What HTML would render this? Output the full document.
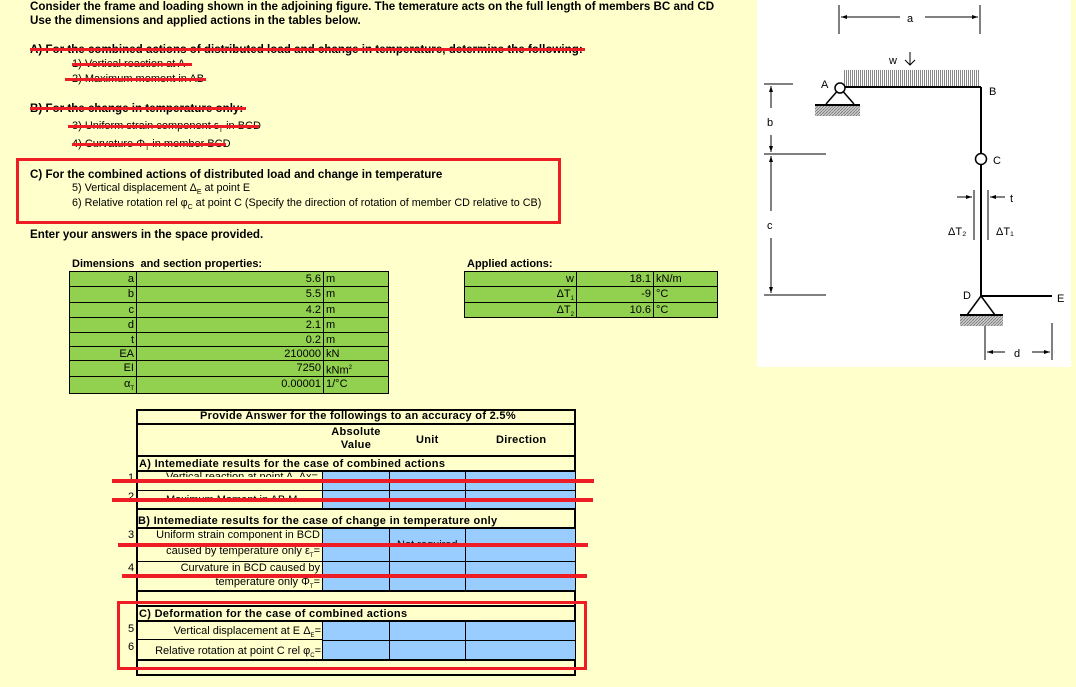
<!DOCTYPE html>
<html><head><meta charset="utf-8"><style>
*{margin:0;padding:0;box-sizing:border-box}
body{width:1076px;height:687px;background:#FFFFCC;font-family:"Liberation Sans",Arial,sans-serif;font-size:11px;color:#000;position:relative;overflow:hidden}
.t{position:absolute;white-space:nowrap;line-height:13px}
.b{font-weight:bold}
.bb{font-size:11.6px}
.tb{letter-spacing:0.3px}
.n{font-size:10.8px}
.r{position:absolute;background:#EE1C25}
.box{position:absolute;border:3px solid #EE1C25}
.c{position:absolute;border:1px solid #000;line-height:14px;font-size:11px;white-space:nowrap;overflow:hidden}
.g{background:#92D050}
.bl{background:#99CCFF}
.ar{text-align:right;padding-right:2px}
.al{padding-left:2px}
.hl{position:absolute;background:#000}
</style></head><body>

<div class="t b bb" style="left:30px;top:0px">Consider the frame and loading shown in the adjoining figure. The temerature acts on the full length of members BC and CD</div>
<div class="t b bb" style="left:30px;top:14px">Use the dimensions and applied actions in the tables below.</div>
<div class="t b bb" style="left:30px;top:43px">A) For the combined actions of distributed load and change in temperature, determine the following:</div>
<div class="r" style="left:30px;top:48px;width:555px;height:3px"></div>
<div class="t" style="left:72px;top:58px">1) Vertical reaction at A</div>
<div class="r" style="left:72px;top:63px;width:120px;height:3px"></div>
<div class="t" style="left:72px;top:73px">2) Maximum moment in AB</div>
<div class="r" style="left:65px;top:78px;width:141px;height:3px"></div>
<div class="t b bb" style="left:30px;top:102px">B) For the change in temperature only:</div>
<div class="r" style="left:30px;top:107px;width:216px;height:3px"></div>
<div class="t" style="left:72px;top:120px">3) Uniform strain component ε<sub style="font-size:7px">T</sub> in BCD</div>
<div class="r" style="left:68px;top:125px;width:191px;height:3px"></div>
<div class="t" style="left:72px;top:138px">4) Curvature Φ<sub style="font-size:7px">T</sub> in member BCD</div>
<div class="r" style="left:72px;top:143px;width:154px;height:3px"></div>

<div class="box" style="left:16px;top:158px;width:545px;height:66px"></div>
<div class="t b bb" style="left:30px;top:168px">C) For the combined actions of distributed load and change in temperature</div>
<div class="t n" style="left:72px;top:182px">5) Vertical displacement Δ<sub style="font-size:7px">E</sub> at point E</div>
<div class="t n" style="left:72px;top:197px">6) Relative rotation rel φ<sub style="font-size:7px">C</sub> at point C (Specify the direction of rotation of member CD relative to CB)</div>
<div class="t b bb" style="left:30px;top:228px">Enter your answers in the space provided.</div>

<div class="t b" style="left:72px;top:258px">Dimensions&nbsp; and section properties:</div>
<div class="t b" style="left:467px;top:258px">Applied actions:</div>

<div class="c g ar" style="left:69px;top:271px;width:68px;height:16px">a</div><div class="c g ar" style="left:136px;top:271px;width:188px;height:16px">5.6</div><div class="c g al" style="left:323px;top:271px;width:66px;height:16px">m</div>
<div class="c g ar" style="left:69px;top:286px;width:68px;height:17px">b</div><div class="c g ar" style="left:136px;top:286px;width:188px;height:17px">5.5</div><div class="c g al" style="left:323px;top:286px;width:66px;height:17px">m</div>
<div class="c g ar" style="left:69px;top:302px;width:68px;height:16px">c</div><div class="c g ar" style="left:136px;top:302px;width:188px;height:16px">4.2</div><div class="c g al" style="left:323px;top:302px;width:66px;height:16px">m</div>
<div class="c g ar" style="left:69px;top:317px;width:68px;height:16px">d</div><div class="c g ar" style="left:136px;top:317px;width:188px;height:16px">2.1</div><div class="c g al" style="left:323px;top:317px;width:66px;height:16px">m</div>
<div class="c g ar" style="left:69px;top:332px;width:68px;height:15px">t</div><div class="c g ar" style="left:136px;top:332px;width:188px;height:15px">0.2</div><div class="c g al" style="left:323px;top:332px;width:66px;height:15px">m</div>
<div class="c g ar" style="left:69px;top:346px;width:68px;height:15px">EA</div><div class="c g ar" style="left:136px;top:346px;width:188px;height:15px">210000</div><div class="c g al" style="left:323px;top:346px;width:66px;height:15px">kN</div>
<div class="c g ar" style="left:69px;top:360px;width:68px;height:17px">EI</div><div class="c g ar" style="left:136px;top:360px;width:188px;height:17px">7250</div><div class="c g al" style="left:323px;top:360px;width:66px;height:17px">kNm<sup style="font-size:6px">2</sup></div>
<div class="c g ar" style="left:69px;top:376px;width:68px;height:18px">α<sub style="font-size:6px">T</sub></div><div class="c g ar" style="left:136px;top:376px;width:188px;height:18px">0.00001</div><div class="c g al" style="left:323px;top:376px;width:66px;height:18px">1/°C</div>

<div class="c g ar" style="left:464px;top:271px;width:113px;height:16px">w</div><div class="c g ar" style="left:576px;top:271px;width:78px;height:16px">18.1</div><div class="c g al" style="left:653px;top:271px;width:65px;height:16px">kN/m</div>
<div class="c g ar" style="left:464px;top:286px;width:113px;height:17px">ΔT<sub style="font-size:6px">1</sub></div><div class="c g ar" style="left:576px;top:286px;width:78px;height:17px">-9</div><div class="c g al" style="left:653px;top:286px;width:65px;height:17px">°C</div>
<div class="c g ar" style="left:464px;top:302px;width:113px;height:16px">ΔT<sub style="font-size:6px">2</sub></div><div class="c g ar" style="left:576px;top:302px;width:78px;height:16px">10.6</div><div class="c g al" style="left:653px;top:302px;width:65px;height:16px">°C</div>

<div style="position:absolute;left:136px;top:409px;width:440px;height:267px;border:2px solid #000"></div>
<div class="hl" style="left:136px;top:423px;width:440px;height:2px"></div>
<div class="t b tb" style="left:200px;top:410px">Provide Answer for the followings to an accuracy of 2.5%</div>
<div class="t b tb" style="left:328px;top:426px;text-align:center;width:56px">Absolute<br>Value</div>
<div class="t b tb" style="left:416px;top:434px">Unit</div>
<div class="t b tb" style="left:496px;top:434px">Direction</div>
<div class="hl" style="left:136px;top:455px;width:440px;height:2px"></div>
<div class="t b tb" style="left:139px;top:458px">A) Intemediate results for the case of combined actions</div>
<div class="hl" style="left:136px;top:470px;width:440px;height:2px"></div>
<div class="c bl" style="left:322px;top:471px;width:68px;height:20px"></div><div class="c bl" style="left:389px;top:471px;width:77px;height:20px"></div><div class="c bl" style="left:465px;top:471px;width:111px;height:20px"></div>
<div class="c bl" style="left:322px;top:490px;width:68px;height:19px"></div><div class="c bl" style="left:389px;top:490px;width:77px;height:19px"></div><div class="c bl" style="left:465px;top:490px;width:111px;height:19px"></div>
<div class="hl" style="left:136px;top:490px;width:187px;height:1px"></div>
<div class="t" style="left:166px;top:471px;height:6px;overflow:hidden">Vertical reaction at point A, Ax=</div>
<div class="t" style="left:166px;top:494px;height:6px;overflow:hidden">Maximum Moment in AB M<sub style="font-size:6px">ABmax</sub></div>
<div class="t" style="left:128px;top:472px">1</div><div class="t" style="left:128px;top:491px">2</div>
<div class="hl" style="left:136px;top:508px;width:440px;height:2px"></div>
<div class="t b tb" style="left:138px;top:515px">B) Intemediate results for the case of change in temperature only</div>
<div class="hl" style="left:136px;top:527px;width:440px;height:2px"></div>
<div class="c bl" style="left:322px;top:528px;width:68px;height:34px"></div><div class="c bl" style="left:389px;top:528px;width:77px;height:34px"></div><div class="c bl" style="left:465px;top:528px;width:111px;height:34px"></div>
<div class="c bl" style="left:322px;top:561px;width:68px;height:30px"></div><div class="c bl" style="left:389px;top:561px;width:77px;height:30px"></div><div class="c bl" style="left:465px;top:561px;width:111px;height:30px"></div>
<div class="hl" style="left:136px;top:561px;width:187px;height:1px"></div>
<div class="hl" style="left:136px;top:590px;width:440px;height:2px"></div>
<div class="t" style="left:397px;top:539px;height:6px;overflow:hidden">Not required</div>
<div class="t" style="left:140px;top:529px;width:180px;text-align:right">Uniform strain component in BCD</div>
<div class="t" style="left:140px;top:545px;width:180px;text-align:right">caused by temperature only ε<sub style="font-size:6px">T</sub>=</div>
<div class="t" style="left:140px;top:562px;width:180px;text-align:right">Curvature in BCD caused by</div>
<div class="t" style="left:140px;top:576px;width:180px;text-align:right">temperature only Φ<sub style="font-size:6px">T</sub>=</div>
<div class="t" style="left:128px;top:529px">3</div><div class="t" style="left:128px;top:562px">4</div>
<div class="hl" style="left:136px;top:605px;width:440px;height:2px"></div>
<div class="t b tb" style="left:139px;top:608px">C) Deformation for the case of combined actions</div>
<div class="hl" style="left:136px;top:620px;width:440px;height:2px"></div>
<div class="c bl" style="left:322px;top:621px;width:68px;height:20px"></div><div class="c bl" style="left:389px;top:621px;width:77px;height:20px"></div><div class="c bl" style="left:465px;top:621px;width:111px;height:20px"></div>
<div class="c bl" style="left:322px;top:640px;width:68px;height:21px"></div><div class="c bl" style="left:389px;top:640px;width:77px;height:21px"></div><div class="c bl" style="left:465px;top:640px;width:111px;height:21px"></div>
<div class="hl" style="left:136px;top:639px;width:187px;height:1px"></div>
<div class="hl" style="left:136px;top:659px;width:440px;height:2px"></div>
<div class="t" style="left:140px;top:625px;width:181px;text-align:right">Vertical displacement at E Δ<sub style="font-size:6px">E</sub>=</div>
<div class="t" style="left:140px;top:645px;width:181px;text-align:right">Relative rotation at point C rel φ<sub style="font-size:6px">C</sub>=</div>
<div class="t" style="left:128px;top:623px">5</div><div class="t" style="left:128px;top:641px">6</div>

<div class="r" style="left:112px;top:479px;width:482px;height:4px"></div>
<div class="r" style="left:112px;top:498px;width:481px;height:4px"></div>
<div class="r" style="left:118px;top:543px;width:470px;height:4px"></div>
<div class="r" style="left:122px;top:574px;width:465px;height:4px"></div>
<div class="box" style="left:117px;top:601px;width:470px;height:69px"></div>

<svg style="position:absolute;left:757px;top:0" width="314" height="367" viewBox="757 0 314 367">
<defs><pattern id="h" width="2" height="2" patternUnits="userSpaceOnUse"><rect width="2" height="2" fill="#fff"/><rect width="1" height="2" fill="#888"/></pattern>
<pattern id="h2" width="3" height="3" patternUnits="userSpaceOnUse"><rect width="3" height="3" fill="#ccc"/><path d="M0 3L3 0" stroke="#777" stroke-width="0.8"/></pattern></defs>
<rect x="757" y="0" width="314" height="367" fill="#fff"/>
<g stroke="#000" stroke-width="1" fill="none">
<line x1="839" y1="5" x2="839" y2="34"/><line x1="980" y1="5" x2="980" y2="34"/>
<line x1="841" y1="17" x2="900" y2="17"/><line x1="925" y1="17" x2="978" y2="17"/>
<line x1="910" y1="52" x2="910" y2="65"/><path d="M905 60L910 65L915 60"/>
<line x1="764" y1="84" x2="793" y2="84"/><line x1="764" y1="154" x2="826" y2="154"/><line x1="764" y1="295" x2="826" y2="295"/>
<line x1="771" y1="86" x2="771" y2="108"/><line x1="771" y1="135" x2="771" y2="152"/>
<line x1="771" y1="156" x2="771" y2="211"/><line x1="771" y1="238" x2="771" y2="293"/>
<line x1="974" y1="190" x2="974" y2="240"/><line x1="988" y1="190" x2="988" y2="240"/>
<line x1="957" y1="197" x2="972" y2="197"/><line x1="990" y1="197" x2="1005" y2="197"/>
<line x1="985" y1="323" x2="985" y2="360"/><line x1="1052" y1="323" x2="1052" y2="360"/>
<line x1="987" y1="352" x2="1005" y2="352"/><line x1="1032" y1="352" x2="1050" y2="352"/>
</g>
<g fill="#000">
<path d="M841 17l6-2v4z"/><path d="M978 17l-6-2v4z"/>
<path d="M771 86l-2 6h4z"/><path d="M771 152l-2-6h4z"/><path d="M771 156l-2 6h4z"/><path d="M771 293l-2-6h4z"/>
<path d="M972 197l-6-2v4z"/><path d="M990 197l6-2v4z"/>
<path d="M987 352l6-2v4z"/><path d="M1050 352l-6-2v4z"/>
</g>
<rect x="844" y="70" width="136" height="16" fill="url(#h)"/>
<rect x="815" y="105" width="45" height="11" fill="url(#h2)"/>
<rect x="960" y="316" width="43" height="10" fill="url(#h2)"/>
<g stroke="#000" fill="none">
<line x1="840" y1="87" x2="981" y2="87" stroke-width="2"/>
<line x1="981" y1="87" x2="981" y2="296" stroke-width="2"/>
<line x1="981" y1="296" x2="1052" y2="296" stroke-width="2"/>
<path d="M840 88L826 104M840 88L854 104" stroke-width="1.5"/>
<line x1="815" y1="105" x2="860" y2="105" stroke-width="2"/>
<path d="M981 296L967 315M981 296L995 315" stroke-width="1.5"/>
<line x1="960" y1="315" x2="1003" y2="315" stroke-width="2"/>
<circle cx="840" cy="88" r="5" fill="#fff" stroke-width="1.5"/>
<circle cx="981" cy="159" r="5.5" fill="#fff" stroke-width="1.5"/>
</g>
<g font-family="Liberation Sans,Arial,sans-serif" font-size="11" fill="#000">
<text x="907" y="22">a</text><text x="889" y="64">w</text>
<text x="821" y="88">A</text><text x="989" y="95">B</text><text x="993" y="164">C</text>
<text x="767" y="126">b</text><text x="767" y="229">c</text><text x="1010" y="202">t</text>
<text x="948" y="235">ΔT₂</text><text x="996" y="235">ΔT₁</text>
<text x="963" y="299">D</text><text x="1057" y="302">E</text><text x="1014" y="357">d</text>
</g>
</svg>
</body></html>
